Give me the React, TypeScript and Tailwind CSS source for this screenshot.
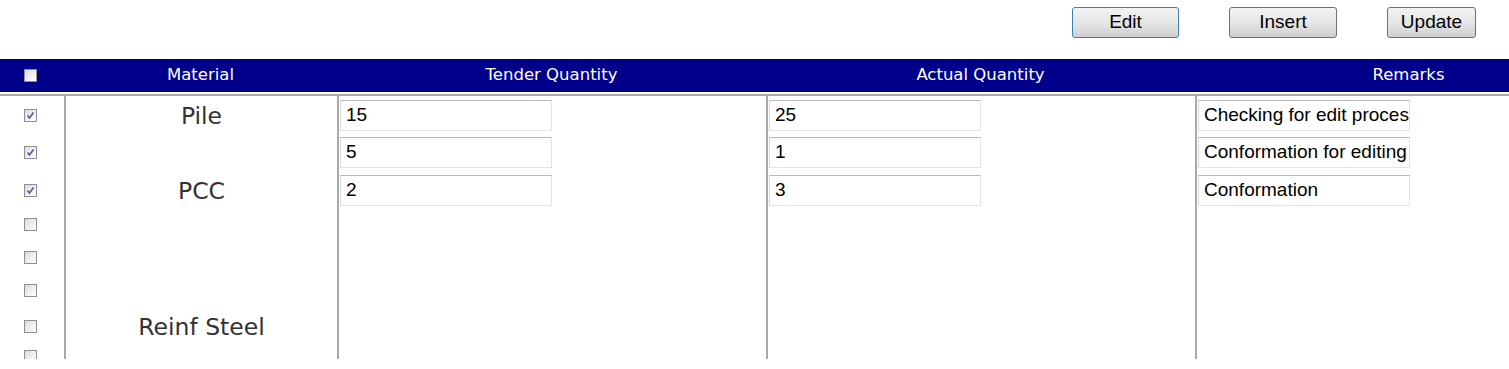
import React from "react";

type Row = {
  checked: boolean;
  material?: string;
  tender?: string;
  actual?: string;
  remarks?: string;
  h: string;
};

const rows: Row[] = [
  { checked: true, material: "Pile", tender: "15", actual: "25", remarks: "Checking for edit process", h: "h-[38px]" },
  { checked: true, tender: "5", actual: "1", remarks: "Conformation for editing", h: "h-[37px]" },
  { checked: true, material: "PCC", tender: "2", actual: "3", remarks: "Conformation", h: "h-[37px]" },
  { checked: false, h: "h-[33px]" },
  { checked: false, h: "h-[33px]" },
  { checked: false, h: "h-[33px]" },
  { checked: false, material: "Reinf Steel", h: "h-[33px]" },
  { checked: false, h: "h-[33px]" },
];

function Check({ checked }: { checked: boolean }) {
  return (
    <span className="flex h-[13px] w-[13px] items-center justify-center border border-[#8f8f8f] bg-gradient-to-br from-[#dcdcdc] to-[#ffffff]">
      {checked && (
        <svg width="9" height="9" viewBox="0 0 9 9">
          <path d="M1.5 4.5 L3.5 7 L7.5 1.5" fill="none" stroke="#4a5a9a" strokeWidth="1.6" />
        </svg>
      )}
    </span>
  );
}

function Btn({ label, active, w }: { label: string; active?: boolean; w: string }) {
  return (
    <button
      className={`${w} h-[31px] rounded-[3px] border bg-gradient-to-b from-[#f3f3f3] via-[#e6e6e6] to-[#cfcfcf] text-[19px] text-black ${
        active ? "border-[#3c7fb1]" : "border-[#707070]"
      }`}
    >
      {label}
    </button>
  );
}

function Field({ value }: { value?: string }) {
  if (value === undefined) return null;
  return (
    <div className="ml-[1px] flex h-[31px] w-[212px] items-center overflow-hidden whitespace-nowrap border border-[#e3e3e3] border-t-[#b8b8b8] border-l-[#dadada] bg-white pl-[5px] text-[19px] text-black">
      {value}
    </div>
  );
}

export default function App() {
  return (
    <div className="h-[369px] w-[1509px] overflow-hidden bg-white font-['Liberation_Sans',Arial,sans-serif]">
      {/* Toolbar */}
      <div className="flex h-[59px] items-start pt-[7px]">
        <div className="ml-[1072px] flex gap-[50px]">
          <Btn label="Edit" active w="w-[107px]" />
          <Btn label="Insert" w="w-[108px]" />
        </div>
        <div className="ml-[50px]">
          <Btn label="Update" w="w-[89px]" />
        </div>
      </div>

      <div className="w-[1622px]">
        {/* Header */}
        <div className="grid h-[33px] grid-cols-[64px_273px_429px_429px_427px] items-center bg-[#00008b] font-['DejaVu_Sans',Verdana,sans-serif] text-[16.5px] text-white">
          <div className="flex pl-[24px]">
            <Check checked={false} />
          </div>
          <div className="text-center">Material</div>
          <div className="text-center">Tender Quantity</div>
          <div className="text-center">Actual Quantity</div>
          <div className="text-center">Remarks</div>
        </div>
        <div className="h-[2px]" />
        <div className="h-[2px] bg-[#a9a9a9]" />

        {/* Body */}
        <div className="h-[263px] overflow-hidden">
          {rows.map((r, i) => (
            <div key={i} className={`grid grid-cols-[64px_273px_429px_429px_427px] ${r.h}`}>
              <div className="flex items-center pl-[24px]">
                <Check checked={r.checked} />
              </div>
              <div className="flex items-center justify-center border-l-2 border-[#a9a9a9] pt-[3px] font-['DejaVu_Sans',Verdana,sans-serif] text-[23.5px] text-[#333]">
                {r.material}
              </div>
              <div className="flex items-center border-l-2 border-[#a9a9a9]">
                <Field value={r.tender} />
              </div>
              <div className="flex items-center border-l-2 border-[#a9a9a9]">
                <Field value={r.actual} />
              </div>
              <div className="flex items-center border-l-2 border-[#a9a9a9]">
                <Field value={r.remarks} />
              </div>
            </div>
          ))}
        </div>
      </div>
    </div>
  );
}
